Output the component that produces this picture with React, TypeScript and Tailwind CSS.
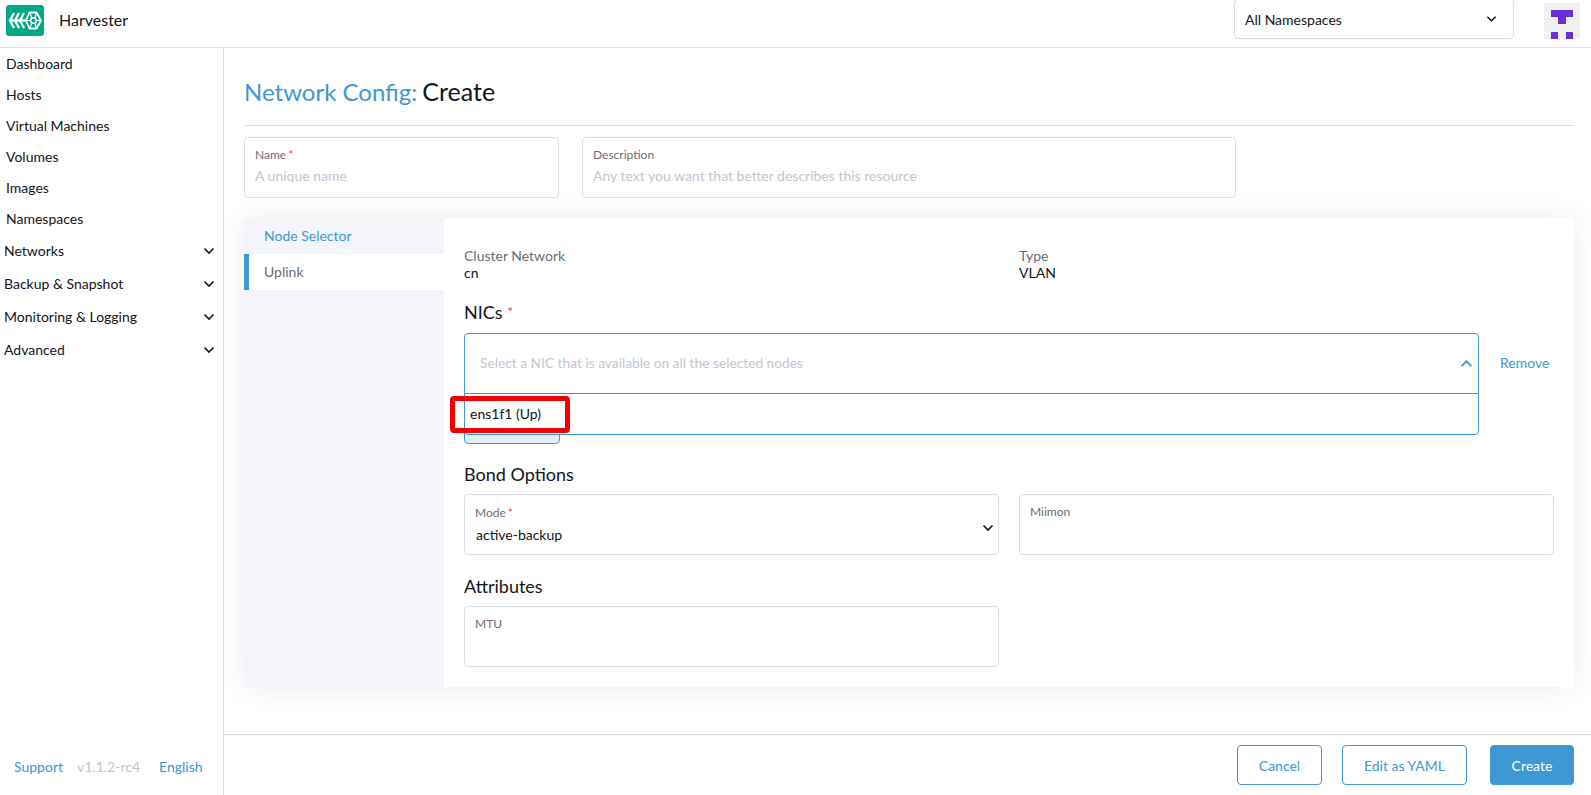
import React from "react";

const Chev = ({ cls = "" }: { cls?: string }) => (
  <svg viewBox="0 0 12 8" className={cls} fill="none" stroke="currentColor" strokeWidth="1.6">
    <path d="M1.5 1.5 6 6l4.5-4.5" />
  </svg>
);

const Logo = () => (
  <svg viewBox="0 0 38 31" className="w-[38px] h-[31px]">
    <rect width="38" height="31" rx="3" fill="#00a886" />
    <g fill="none" stroke="#fff">
      <path d="M23.500 7.500h7l4.500 8-4.500 8h-7L20 15.500z" strokeWidth="1.800" />
      <circle cx="27.500" cy="15.500" r="2.800" strokeWidth="1.500" />
      <path d="M23.500 7.500l2.500 5.500M30.500 7.500L29 13M20 15.500h4.700M35 15.500h-4.700M23.500 23.500l2.500-5.500M30.500 23.500L29 18" strokeWidth="1.200" />
    </g>
    <g fill="none" stroke="#fff" strokeWidth="2.300">
      <path d="M3 15.500h17" />
      <path d="M8 8 4 15.500 8 23M13 8 9 15.500 13 23M18 8l-4 7.500 4 7.500" />
    </g>
  </svg>
);

const Avatar = () => (
  <svg viewBox="0 0 36 36" className="w-[36px] h-[36px]">
    <rect width="36" height="36" fill="#f0f0f0" />
    <path d="M7 7h22v7h-7v7h-8v-7H7zM7 29h7v7H7zM22 29h7v7h-7z" fill="#6a2fd6" />
  </svg>
);

const Field = ({ label, req, placeholder, value, cls }: { label: string; req?: boolean; placeholder?: string; value?: string; cls: string }) => (
  <div className={`relative border border-[#dcdee7] rounded-[4px] h-[61px] px-[10px] pt-[9px] bg-white ${cls}`}>
    <div className="text-[12px] leading-[15px] text-[#6c6c76]">
      {label}
      {req && <span className="text-[#f64747] ml-[2px]">*</span>}
    </div>
    <div className={`text-[14px] leading-[21px] mt-[3px] ${placeholder ? "text-[#c4c5d1]" : "text-[#141419]"}`}>{placeholder ?? value}</div>
  </div>
);

const NavItem = ({ t }: { t: string }) => <div className="h-[31px] flex items-center pl-[6px] text-[14px] text-[#141419]">{t}</div>;
const NavGroup = ({ t }: { t: string }) => (
  <div className="h-[33px] flex items-center justify-between pl-[4px] pr-[8px] text-[14px] text-[#141419]">
    {t}
    <Chev cls="w-[12px] h-[8px]" />
  </div>
);

const Btn = ({ t, cls }: { t: string; cls: string }) => (
  <button className={`h-[40px] rounded-[4px] text-[14px] border ${cls}`}>{t}</button>
);

export default function App() {
  return (
    <div className="w-[1591px] h-[795px] overflow-hidden bg-white flex flex-col text-[#141419] font-['Lato','Liberation_Sans',sans-serif]">
      <header className="h-[48px] shrink-0 border-b border-[#dcdee7] flex items-start">
        <div className="ml-[6px] mt-[5px]">
          <Logo />
        </div>
        <div className="ml-[15px] mt-[8px] text-[16px] leading-[24px]">Harvester</div>
        <div className="ml-auto mt-[-1px] w-[280px] h-[40px] border border-[#dcdee7] rounded-[4px] flex items-center justify-between pl-[10px] pr-[16px] text-[14px]">
          All Namespaces
          <Chev cls="w-[11px] h-[8px]" />
        </div>
        <div className="ml-[30px] mr-[11px] mt-[3px] h-[36px] overflow-hidden">
          <Avatar />
        </div>
      </header>
      <div className="flex flex-1 min-h-0">
        <aside className="w-[224px] shrink-0 border-r border-[#dcdee7] flex flex-col">
          <div>
            {["Dashboard", "Hosts", "Virtual Machines", "Volumes", "Images", "Namespaces"].map((t) => (
              <NavItem key={t} t={t} />
            ))}
            {["Networks", "Backup & Snapshot", "Monitoring & Logging", "Advanced"].map((t) => (
              <NavGroup key={t} t={t} />
            ))}
          </div>
          <div className="mt-auto mb-[18px] flex text-[14px] leading-[21px]">
            <span className="ml-[14px] text-[#3d98d3]">Support</span>
            <span className="ml-[14px] text-[#c4c5d1]">v1.1.2-rc4</span>
            <span className="ml-[19px] text-[#3d98d3]">English</span>
          </div>
        </aside>
        <main className="flex-1 flex flex-col min-w-0">
          <div className="flex-1 pl-[20px] pr-[17px] min-h-0">
            <div className="pt-[27px] h-[78px] border-b border-[#dcdee7] text-[24px] leading-[32px]">
              <span className="text-[#3d98d3]">Network Config:</span>
              <span className="ml-[5px] text-[25px]">Create</span>
            </div>
            <div className="flex mt-[11px] w-[992px]">
              <Field label="Name" req placeholder="A unique name" cls="w-[315px]" />
              <Field label="Description" placeholder="Any text you want that better describes this resource" cls="w-[654px] ml-[23px]" />
            </div>
            <div className="mt-[20px] w-[1330px] h-[469px] flex bg-white shadow-[0_0_30px_rgba(0,0,0,0.08)]">
              <div className="w-[200px] shrink-0 bg-[#f4f5fa] text-[14px]">
                <div className="h-[36px] flex items-center pl-[20px] pb-[2px] text-[#3d98d3]">Node Selector</div>
                <div className="h-[36px] flex items-center pl-[15px] pb-[2px] bg-white border-l-[5px] border-[#3d98d3] text-[#6c6c76]">Uplink</div>
              </div>
              <div className="flex-1 pl-[20px] pr-[20px] pt-[29px] relative">
                <div className="flex text-[14px] leading-[17px]">
                  <div className="w-[555px]">
                    <div className="text-[#6c6c76]">Cluster Network</div>
                    <div>cn</div>
                  </div>
                  <div>
                    <div className="text-[#6c6c76]">Type</div>
                    <div>VLAN</div>
                  </div>
                </div>
                <div className="mt-[18px] text-[18px] leading-[26px]">
                  NICs <span className="text-[#f64747] text-[14px] align-top">*</span>
                </div>
                <div className="relative mt-[8px] h-[111px] w-[1015px]">
                  <div className="absolute left-0 top-[90px] w-[96px] h-[21px] rounded-[4px] border border-[#3d98d3] bg-[#e2eff8]" />
                  <div className="absolute inset-x-0 top-0 h-[102px] rounded-[4px] border border-[#3d98d3] bg-white flex flex-col text-[14px]">
                    <div className="h-[60px] shrink-0 border-b border-[#3d98d3] flex items-center justify-between pl-[15px] pr-[5px] text-[13.750px] text-[#c4c5d1]">
                      Select a NIC that is available on all the selected nodes
                      <Chev cls="w-[13px] h-[9px] text-[#3d98d3] rotate-180" />
                    </div>
                    <div className="flex-1 flex items-center pl-[5px] pb-[2px]">ens1f1 (Up)</div>
                  </div>
                  <div className="absolute left-[-14px] top-[63px] w-[120px] h-[37px] rounded-[4px] border-[5px] border-[#f00000]" />
                  <div className="absolute left-[1036px] top-[19px] text-[14px] leading-[21px] text-[#3d98d3]">Remove</div>
                </div>
                <div className="mt-[17px] text-[18px] leading-[26px]">Bond Options</div>
                <div className="flex mt-[7px]">
                  <div className="relative w-[535px] h-[61px] border border-[#dcdee7] rounded-[4px] pl-[11px] pr-[10px] pt-[9px]">
                    <div className="text-[12px] leading-[15px] text-[#6c6c76] ml-[-1px] mt-[1px]">
                      Mode<span className="text-[#f64747] ml-[2px]">*</span>
                    </div>
                    <div className="text-[14px] leading-[21px] mt-[4px]">active-backup</div>
                    <Chev cls="absolute right-[4px] top-[29px] w-[12px] h-[8px]" />
                  </div>
                  <Field label="Miimon" cls="w-[535px] ml-[20px]" />
                </div>
                <div className="mt-[18px] text-[18px] leading-[26px]">Attributes</div>
                <div className="mt-[7px]">
                  <Field label="MTU" cls="w-[535px]" />
                </div>
              </div>
            </div>
          </div>
          <div className="h-[61px] shrink-0 border-t border-[#dcdee7] flex items-center justify-end pr-[17px]">
            <Btn t="Cancel" cls="w-[85px] border-[#3d98d3] text-[#3d98d3] bg-white" />
            <Btn t="Edit as YAML" cls="w-[125px] ml-[20px] border-[#3d98d3] text-[#3d98d3] bg-white" />
            <Btn t="Create" cls="w-[84px] ml-[23px] border-[#3d98d3] bg-[#3d98d3] text-white" />
          </div>
        </main>
      </div>
    </div>
  );
}
